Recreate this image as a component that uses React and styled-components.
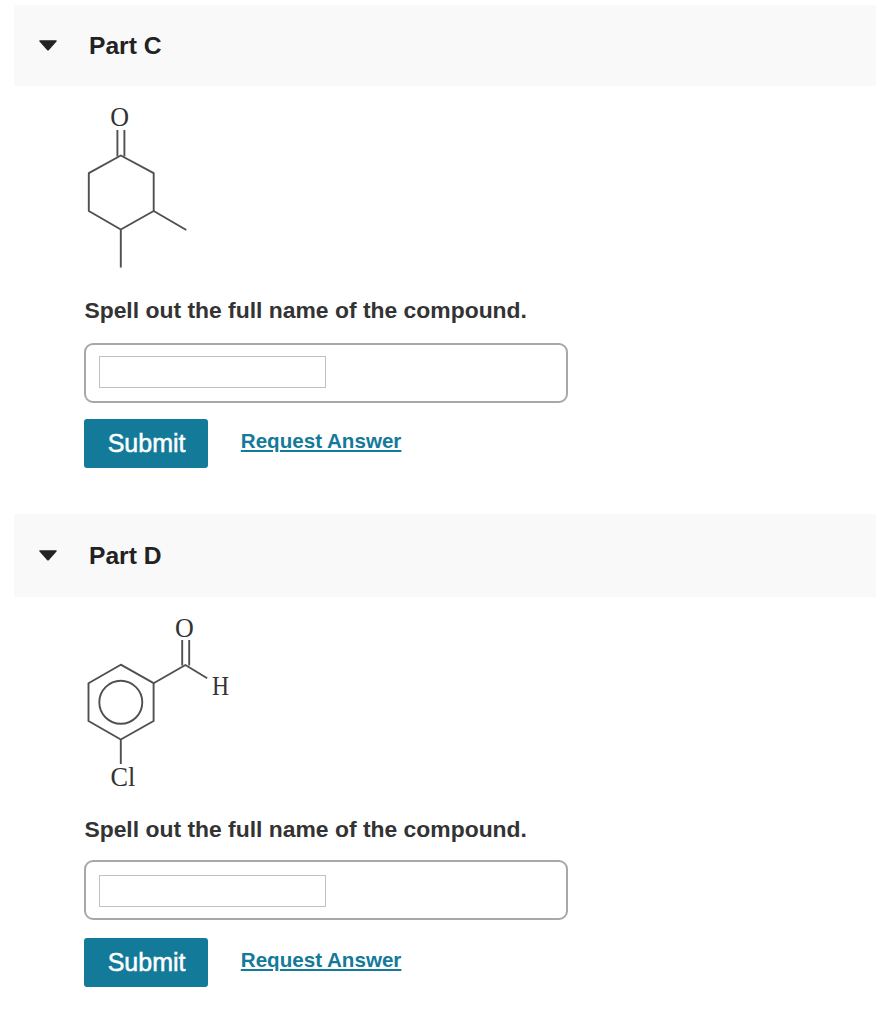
import React from 'react';
import styled, { createGlobalStyle } from 'styled-components'


const GlobalStyle = createGlobalStyle`
body {
  margin: 0;
  background: #fff;
  font-family: "Liberation Sans", Arial, sans-serif;
}
`

const Ketone = () => (
  <Molecule width='170' height='190' viewBox='84 86 170 190'>
    <path d='M120.8 155.5 L153.7 173.2 V211 L120.8 229.5 L88.8 211 V173.2 Z' />
    <path d='M153.7 211 L186.3 230 M120.8 229.5 V267.5' />
    <path d='M117.4 130 V156.5 M124.4 130 V156.5' />
    <text x='110.3' y='126.3' textLength='18.8' lengthAdjust='spacingAndGlyphs'>O</text>
  </Molecule>
)

const Aldehyde = () => (
  <Molecule width='170' height='200' viewBox='84 597 170 200'>
    <path d='M120.8 664.7 L153.6 683.2 V721 L120.8 739.5 L88.5 721 V683.2 Z' />
    <circle cx='120.8' cy='702.3' r='21.5' />
    <path d='M153.6 683.2 L185.4 665 L207.2 678.2 M120.8 739.5 V764' />
    <path d='M182.2 640 V665.5 M189.2 640 V665.5' />
    <text x='175' y='636.5' textLength='18.8' lengthAdjust='spacingAndGlyphs'>O</text>
    <text x='212' y='695' textLength='17' lengthAdjust='spacingAndGlyphs'>H</text>
    <text x='110.5' y='785.8' textLength='24.8' lengthAdjust='spacingAndGlyphs'>Cl</text>
  </Molecule>
)

const parts = [
  { title: 'Part C', drawing: <Ketone />, head: 81, textTop: 20, boxTop: 19, inputTop: 11, submitTop: 16, after: 46 },
  { title: 'Part D', drawing: <Aldehyde />, head: 83, textTop: 18, boxTop: 17, inputTop: 13, submitTop: 18, after: 37 },
]

const App = () => {
  return (
    <Page>
      <GlobalStyle />
      {parts.map((part) => (
        <Section key={part.title} $after={part.after}>
          <Header $height={part.head}>
            <Arrow width='18' height='11' viewBox='0 0 18 11'>
              <path d='M1 0.3 H17 Q18.4 0.5 17.5 1.6 L10 9.9 Q9 10.9 8 9.9 L0.5 1.6 Q-0.4 0.5 1 0.3 Z' />
            </Arrow>
            <Title>{part.title}</Title>
          </Header>
          <Content>
            {part.drawing}
            <Question $top={part.textTop}>Spell out the full name of the compound.</Question>
            <AnswerBox $top={part.boxTop} $pad={part.inputTop}>
              <AnswerInput type='text' aria-label={part.title} />
            </AnswerBox>
            <Actions $top={part.submitTop}>
              <Submit type='button'>Submit</Submit>
              <Request href='#'>Request Answer</Request>
            </Actions>
          </Content>
        </Section>
      ))}
    </Page>
  )
}

export default App

const Page = styled.main`
width: 100%;
height: 1024px;
overflow: hidden;
box-sizing: border-box;
padding: 5px 0 0 14px;
`

const Section = styled.section`
padding-bottom: ${(p) => p.$after}px;
`

const Header = styled.header`
height: ${(p) => p.$height}px;
display: flex;
align-items: center;
gap: 32px;
padding-left: 25px;
background: #f9f9f9;
`

const Arrow = styled.svg`
display: block;
fill: #222;
`

const Title = styled.h2`
margin: 0;
font-size: 24.6px;
line-height: 28px;
font-weight: bold;
color: #222;
`

const Content = styled.div`
padding-left: 70.4px;
`

const Molecule = styled.svg`
display: block;
fill: none;
stroke: #505050;
stroke-width: 1.9px;
stroke-linejoin: round;

text {
  font-family: "Liberation Serif", "Times New Roman", serif;
  font-size: 27px;
  fill: #333;
  stroke: none;
}
`

const Question = styled.p`
margin: ${(p) => p.$top}px 0 0;
font-size: 22.9px;
line-height: 28px;
font-weight: bold;
color: #333;
white-space: nowrap;
`

const AnswerBox = styled.div`
box-sizing: border-box;
width: 483.4px;
height: 60px;
margin-top: ${(p) => p.$top}px;
padding: ${(p) => p.$pad}px 0 0 12.6px;
border: 2px solid #a8a8a8;
border-radius: 9px;
`

const AnswerInput = styled.input`
display: block;
box-sizing: border-box;
width: 227px;
height: 32px;
margin: 0;
border: 1px solid #c2c2c2;
border-radius: 0;
background: #fff;
`

const Actions = styled.div`
display: flex;
gap: 33px;
margin-top: ${(p) => p.$top}px;
`

const Submit = styled.button`
width: 123.4px;
height: 49px;
padding: 0 0 0 1px;
border: 0;
border-radius: 3px;
background: #147a9a;
color: #fff;
font-family: inherit;
font-size: 25px;
-webkit-text-stroke: 0.5px #fff;
`

const Request = styled.a`
margin-top: 9px;
font-size: 20.6px;
line-height: 25px;
font-weight: bold;
color: #147a9a;
text-decoration: underline;
text-decoration-thickness: 1.5px;
text-underline-offset: 2px;
`
